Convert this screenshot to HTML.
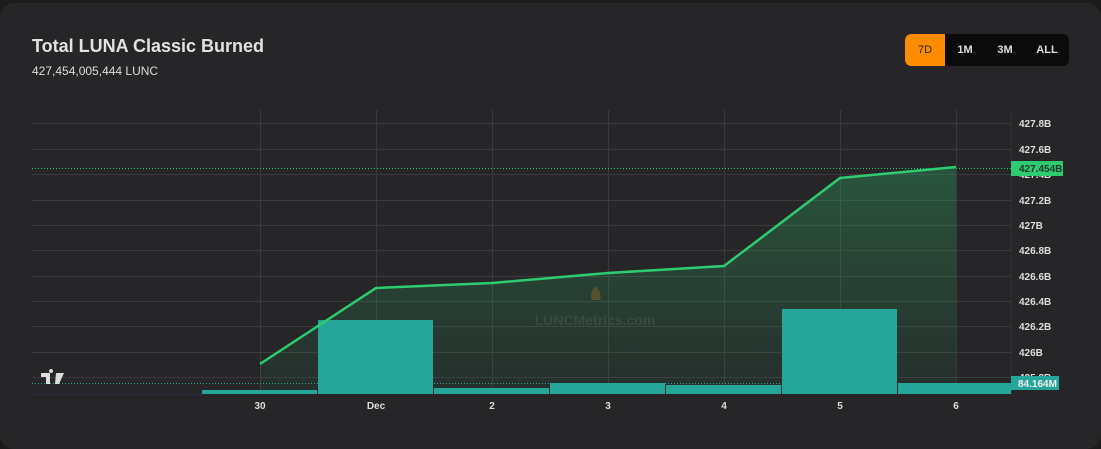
<!DOCTYPE html>
<html><head><meta charset="utf-8"><style>
html,body{margin:0;padding:0;width:1101px;height:449px;background:#1b1b1c;overflow:hidden;font-family:"Liberation Sans",sans-serif}
.card{position:absolute;left:0;top:3px;width:1101px;height:446px;background:#262628;border-radius:14px}
.t{position:absolute;left:32px;top:36px;color:#e2e2e2;font-weight:bold;font-size:18px}
.s{position:absolute;left:32px;top:64px;color:#ddd;font-size:12px}
.btns{position:absolute;left:905px;top:34px;width:164px;height:32px;background:#0b0b0b;border-radius:6px;display:flex;overflow:hidden}
.btns div{width:40px;text-align:center;line-height:32px;color:#ddd;font-size:11px;font-weight:bold}
.btns .a{background:#ff8c00;color:#222;font-weight:normal;border-radius:6px 0 0 6px}
svg{position:absolute;left:0;top:0}
</style></head><body>
<div class="card"></div>
<div class="t">Total LUNA Classic Burned</div>
<div class="s">427,454,005,444 LUNC</div>
<div class="btns"><div class="a">7D</div><div>1M</div><div>3M</div><div style="width:44px">ALL</div></div>
<svg width="1101" height="449" font-family="Liberation Sans, sans-serif">
<defs><linearGradient id="g" x1="0" y1="0" x2="0" y2="1"><stop offset="0" stop-color="#2ecc71" stop-opacity="0.28"/><stop offset="1" stop-color="#2ecc71" stop-opacity="0.05"/></linearGradient></defs>
<g stroke="#3a3a3c" stroke-width="1">
<line x1="32" y1="123.5" x2="1011" y2="123.5"/><line x1="32" y1="149.5" x2="1011" y2="149.5"/><line x1="32" y1="174.5" x2="1011" y2="174.5"/><line x1="32" y1="200.5" x2="1011" y2="200.5"/><line x1="32" y1="225.5" x2="1011" y2="225.5"/><line x1="32" y1="250.5" x2="1011" y2="250.5"/><line x1="32" y1="276.5" x2="1011" y2="276.5"/><line x1="32" y1="301.5" x2="1011" y2="301.5"/><line x1="32" y1="326.5" x2="1011" y2="326.5"/><line x1="32" y1="352.5" x2="1011" y2="352.5"/><line x1="32" y1="377.5" x2="1011" y2="377.5"/>
<line x1="260.5" y1="110" x2="260.5" y2="394"/><line x1="376.5" y1="110" x2="376.5" y2="394"/><line x1="492.5" y1="110" x2="492.5" y2="394"/><line x1="608.5" y1="110" x2="608.5" y2="394"/><line x1="724.5" y1="110" x2="724.5" y2="394"/><line x1="840.5" y1="110" x2="840.5" y2="394"/><line x1="956.5" y1="110" x2="956.5" y2="394"/>
<line x1="1011.5" y1="110" x2="1011.5" y2="394" stroke="#303036"/>
</g>
<polygon points="260,364 376,288 492,283 608,273 724,266 840,178 956,167 956,394 260,394" fill="url(#g)"/>
<text x="595" y="325" font-size="14" font-weight="bold" fill="#3a4a3e" text-anchor="middle">LUNCMetrics.com</text>
<path d="M596 286c-5 5-6 9-4 14h8c2-5-1-9-4-14z" fill="#6b5a2a" opacity="0.7"/>
<g fill="#26a69a">
<rect x="202" y="390" width="115" height="4"/><rect x="318" y="320" width="115" height="74"/><rect x="434" y="388" width="115" height="6"/><rect x="550" y="383" width="115" height="11"/><rect x="666" y="385" width="115" height="9"/><rect x="782" y="309" width="115" height="85"/><rect x="898" y="383" width="113" height="11"/>
</g>
<line x1="32" y1="394.5" x2="202" y2="394.5" stroke="#2a2a44"/>
<line x1="32" y1="383.5" x2="1011" y2="383.5" stroke="#26a69a" stroke-dasharray="1 2"/>
<line x1="32" y1="168.5" x2="1011" y2="168.5" stroke="#2ecc71" stroke-dasharray="1 2"/>
<polyline points="260,364 376,288 492,283 608,273 724,266 840,178 956,167" fill="none" stroke="#2ecc71" stroke-width="2.5"/>
<g fill="#ddd" font-size="10" font-weight="bold">
<text x="1019" y="127">427.8B</text><text x="1019" y="153">427.6B</text><text x="1019" y="178">427.4B</text><text x="1019" y="204">427.2B</text><text x="1019" y="229">427B</text><text x="1019" y="254">426.8B</text><text x="1019" y="280">426.6B</text><text x="1019" y="305">426.4B</text><text x="1019" y="330">426.2B</text><text x="1019" y="356">426B</text><text x="1019" y="381">425.8B</text>
</g>
<rect x="1011" y="161" width="52" height="15" fill="#2ecc71"/>
<text x="1019" y="172" font-size="10" font-weight="bold" fill="#1d3a28">427.454B</text>
<rect x="1011" y="376" width="48" height="14" fill="#26a69a"/>
<text x="1018" y="387" font-size="10" font-weight="bold" fill="#eee">84.164M</text>
<g fill="#ddd" font-size="10" font-weight="bold" text-anchor="middle">
<text x="260" y="409">30</text><text x="376" y="409">Dec</text><text x="492" y="409">2</text><text x="608" y="409">3</text><text x="724" y="409">4</text><text x="840" y="409">5</text><text x="956" y="409">6</text>
</g>
<path d="M41 373h9v11h-4v-7h-5z M51 373a2 2 0 1 1 0.1 0z M56 373h8l-5 11h-4z" fill="#ddd"/>
</svg>
</body></html>
